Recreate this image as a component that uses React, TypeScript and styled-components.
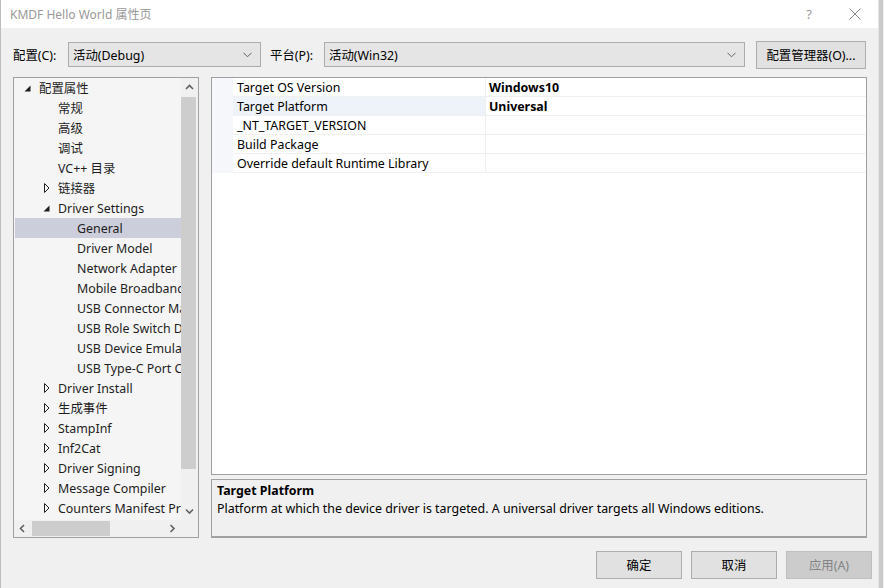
import React from 'react';
import styled, { createGlobalStyle } from 'styled-components';

const GlobalStyle = createGlobalStyle`
  html, body {
    margin: 0;
    padding: 0;
    background: #f0f0f0;
  }
  body {
    font-family: "Noto Sans", "Noto Sans CJK SC", sans-serif;
    font-size: 12.4px;
    color: #000;
  }
  * {
    box-sizing: border-box;
  }
`;

const Screen = styled.div`
  display: flex;
  width: 884px;
  height: 588px;
  overflow: hidden;
`;

const Window = styled.div`
  display: flex;
  flex-direction: column;
  width: 878px;
  height: 100%;
  border-left: 1px solid #bdbdbd;
  background: #f0f0f0;
`;

const Edge = styled.div`
  width: 6px;
  height: 100%;
  background: linear-gradient(to right, #e6e6e6 0 1px, #c9c9c9 1px 5px, #ededed 5px);
`;

const TitleBar = styled.div`
  display: flex;
  align-items: center;
  height: 28px;
  padding-left: 9px;
  background: #fff;
  color: #999;
  font-size: 12px;
`;

const TitleText = styled.span`
  flex: 1;
`;

const TitleButton = styled.div`
  display: flex;
  align-items: center;
  justify-content: center;
  width: 46px;
  height: 28px;
  color: #9a9a9a;
  font-size: 13px;
`;

const Client = styled.div`
  display: flex;
  flex-direction: column;
  flex: 1;
  padding: 0 11px 0 12px;
`;

const ConfigRow = styled.div`
  display: flex;
  align-items: center;
  height: 27px;
  margin-top: 13px;
`;

const FieldLabel = styled.span<{ $width: number }>`
  width: ${(p) => p.$width}px;
  flex: none;
  white-space: nowrap;
`;

const Combo = styled.div<{ $width: number }>`
  display: flex;
  align-items: center;
  justify-content: space-between;
  width: ${(p) => p.$width}px;
  height: 25px;
  padding: 0 8px 0 4px;
  background: #e5e5e5;
  border: 1px solid #acacac;
  flex: none;
`;

const PushButton = styled.div<{ $width: number; $disabled?: boolean }>`
  display: flex;
  align-items: center;
  justify-content: center;
  width: ${(p) => p.$width}px;
  height: 28px;
  flex: none;
  background: ${(p) => (p.$disabled ? '#cccccc' : '#e1e1e1')};
  border: 1px solid ${(p) => (p.$disabled ? '#bfbfbf' : '#adadad')};
  color: ${(p) => (p.$disabled ? '#838383' : '#000')};
`;

const MainArea = styled.div`
  display: flex;
  gap: 12px;
  height: 461px;
  margin-top: 9px;
`;

const TreePanel = styled.div`
  display: flex;
  flex-direction: column;
  width: 186px;
  flex: none;
  border: 1px solid #a0a0a0;
  background: #f5f5f5;
`;

const TreeBody = styled.div`
  display: flex;
  flex: 1;
  min-height: 0;
`;

const TreeList = styled.div`
  flex: 1;
  min-width: 0;
  overflow: hidden;
  padding-left: 1px;
`;

const TreeRow = styled.div<{ $level: number; $selected?: boolean }>`
  display: flex;
  align-items: center;
  height: 20px;
  padding-left: ${(p) => 9 + p.$level * 19}px;
  background: ${(p) => (p.$selected ? '#cccedb' : 'transparent')};
  color: #1e1e1e;
  white-space: nowrap;
`;

const ArrowBox = styled.span`
  display: flex;
  align-items: center;
  width: 15px;
  height: 20px;
  flex: none;
`;

const VScroll = styled.div`
  display: flex;
  flex-direction: column;
  width: 17px;
  flex: none;
  background: #f0f0f0;
`;

const ScrollArrow = styled.div<{ $size: number }>`
  display: flex;
  align-items: center;
  justify-content: center;
  width: 17px;
  height: ${(p) => p.$size}px;
  flex: none;
`;

const VTrack = styled.div`
  flex: 1;
  padding: 1px 1px 0 0;
`;

const VThumb = styled.div`
  width: 15px;
  height: 372px;
  background: #cdcdcd;
`;

const HScrollRow = styled.div`
  display: flex;
  height: 17px;
  flex: none;
  background: #f0f0f0;
`;

const HTrack = styled.div`
  display: flex;
  align-items: center;
  flex: 1;
`;

const HThumb = styled.div`
  width: 78px;
  height: 15px;
  margin-left: 1px;
  background: #cdcdcd;
`;

const RightColumn = styled.div`
  display: flex;
  flex-direction: column;
  gap: 4px;
  flex: 1;
  min-width: 0;
`;

const PropertyGrid = styled.div`
  flex: 1;
  border: 1px solid #a0a0a0;
  background: #fff;
`;

const PropRow = styled.div`
  display: grid;
  grid-template-columns: 21px 252px 1fr;
  height: 19px;
`;

const Gutter = styled.div`
  background: #f5f7fb;
`;

const NameCell = styled.div<{ $selected?: boolean }>`
  display: flex;
  align-items: center;
  padding: 1px 0 0 4px;
  background: ${(p) => (p.$selected ? '#eef2f9' : '#fff')};
  border-bottom: 1px solid #f0f0f0;
  white-space: nowrap;
  overflow: hidden;
`;

const ValueCell = styled.div`
  display: flex;
  align-items: center;
  padding: 1px 0 0 3px;
  border-left: 1px solid #f0f0f0;
  border-bottom: 1px solid #f0f0f0;
  font-weight: 700;
  white-space: nowrap;
  overflow: hidden;
`;

const Description = styled.div`
  height: 59px;
  flex: none;
  padding: 2px 5px;
  border: 1px solid #a0a0a0;
  border-bottom: 2px solid #a0a0a0;
  background: #f0f0f0;
  line-height: 18px;
`;

const DescTitle = styled.div`
  font-weight: 700;
`;

const DescText = styled.div`
  white-space: nowrap;
`;

const ButtonRow = styled.div`
  display: flex;
  justify-content: flex-end;
  gap: 9px;
  margin-top: 13px;
  margin-right: -5px;
`;

const Chevron = ({ dir }: { dir: 'up' | 'down' | 'left' | 'right' }) => {
  const paths = {
    up: 'M1 5 L4.5 1.5 L8 5',
    down: 'M1 1.5 L4.5 5 L8 1.5',
    left: 'M5 1 L1.5 4.5 L5 8',
    right: 'M1.5 1 L5 4.5 L1.5 8',
  };
  const horizontal = dir === 'left' || dir === 'right';
  return (
    <svg width={horizontal ? 7 : 9} height={horizontal ? 9 : 7} viewBox={horizontal ? '0 0 7 9' : '0 0 9 7'}>
      <path d={paths[dir]} fill="none" stroke="#606060" strokeWidth="1.6" />
    </svg>
  );
};

const ComboChevron = () => (
  <svg width="9" height="6" viewBox="0 0 9 6">
    <path d="M0.5 0.8 L4.5 4.8 L8.5 0.8" fill="none" stroke="#606060" strokeWidth="1" />
  </svg>
);

const TreeArrow = ({ open }: { open: boolean }) =>
  open ? (
    <svg width="7" height="7" viewBox="0 0 7 7" style={{ marginTop: 1 }}>
      <polygon points="6.5,0.5 6.5,6.5 0.5,6.5" fill="#1e1e1e" />
    </svg>
  ) : (
    <svg width="6" height="10" viewBox="0 0 6 10" style={{ marginLeft: 1 }}>
      <polygon points="0.5,0.5 5,5 0.5,9.5" fill="none" stroke="#1e1e1e" strokeWidth="1" />
    </svg>
  );

type TreeItem = { label: string; level: number; arrow?: 'open' | 'closed'; selected?: boolean };

const treeItems: TreeItem[] = [
  { label: '配置属性', level: 0, arrow: 'open' },
  { label: '常规', level: 1 },
  { label: '高级', level: 1 },
  { label: '调试', level: 1 },
  { label: 'VC++ 目录', level: 1 },
  { label: '链接器', level: 1, arrow: 'closed' },
  { label: 'Driver Settings', level: 1, arrow: 'open' },
  { label: 'General', level: 2, selected: true },
  { label: 'Driver Model', level: 2 },
  { label: 'Network Adapter', level: 2 },
  { label: 'Mobile Broadband', level: 2 },
  { label: 'USB Connector Manager', level: 2 },
  { label: 'USB Role Switch Driver', level: 2 },
  { label: 'USB Device Emulation', level: 2 },
  { label: 'USB Type-C Port Controller', level: 2 },
  { label: 'Driver Install', level: 1, arrow: 'closed' },
  { label: '生成事件', level: 1, arrow: 'closed' },
  { label: 'StampInf', level: 1, arrow: 'closed' },
  { label: 'Inf2Cat', level: 1, arrow: 'closed' },
  { label: 'Driver Signing', level: 1, arrow: 'closed' },
  { label: 'Message Compiler', level: 1, arrow: 'closed' },
  { label: 'Counters Manifest Preprocessor', level: 1, arrow: 'closed' },
];

const properties = [
  { name: 'Target OS Version', value: 'Windows10' },
  { name: 'Target Platform', value: 'Universal', selected: true },
  { name: '_NT_TARGET_VERSION', value: '' },
  { name: 'Build Package', value: '' },
  { name: 'Override default Runtime Library', value: '' },
];

export default function App() {
  return (
    <Screen>
      <GlobalStyle />
      <Window>
        <TitleBar>
          <TitleText>KMDF Hello World 属性页</TitleText>
          <TitleButton>?</TitleButton>
          <TitleButton>
            <svg width="12" height="12" viewBox="0 0 12 12">
              <path d="M0.5 0.5 L11.5 11.5 M11.5 0.5 L0.5 11.5" stroke="#8a8a8a" strokeWidth="1" />
            </svg>
          </TitleButton>
        </TitleBar>
        <Client>
          <ConfigRow>
            <FieldLabel $width={55}>配置(C):</FieldLabel>
            <Combo $width={193}>
              <span>活动(Debug)</span>
              <ComboChevron />
            </Combo>
            <FieldLabel $width={54} style={{ marginLeft: 9 }}>平台(P):</FieldLabel>
            <Combo $width={421}>
              <span>活动(Win32)</span>
              <ComboChevron />
            </Combo>
            <PushButton $width={110} style={{ marginLeft: 11 }}>配置管理器(O)...</PushButton>
          </ConfigRow>
          <MainArea>
            <TreePanel>
              <TreeBody>
                <TreeList>
                  {treeItems.map((item) => (
                    <TreeRow key={item.label} $level={item.level} $selected={item.selected}>
                      <ArrowBox>{item.arrow && <TreeArrow open={item.arrow === 'open'} />}</ArrowBox>
                      <span>{item.label}</span>
                    </TreeRow>
                  ))}
                </TreeList>
                <VScroll>
                  <ScrollArrow $size={18}>
                    <Chevron dir="up" />
                  </ScrollArrow>
                  <VTrack>
                    <VThumb />
                  </VTrack>
                  <ScrollArrow $size={17}>
                    <Chevron dir="down" />
                  </ScrollArrow>
                </VScroll>
              </TreeBody>
              <HScrollRow>
                <ScrollArrow $size={17}>
                  <Chevron dir="left" />
                </ScrollArrow>
                <HTrack>
                  <HThumb />
                </HTrack>
                <ScrollArrow $size={17}>
                  <Chevron dir="right" />
                </ScrollArrow>
                <ScrollArrow $size={17} />
              </HScrollRow>
            </TreePanel>
            <RightColumn>
              <PropertyGrid>
                {properties.map((p) => (
                  <PropRow key={p.name}>
                    <Gutter />
                    <NameCell $selected={p.selected}>{p.name}</NameCell>
                    <ValueCell>{p.value}</ValueCell>
                  </PropRow>
                ))}
              </PropertyGrid>
              <Description>
                <DescTitle>Target Platform</DescTitle>
                <DescText>Platform at which the device driver is targeted. A universal driver targets all Windows editions.</DescText>
              </Description>
            </RightColumn>
          </MainArea>
          <ButtonRow>
            <PushButton $width={86}>确定</PushButton>
            <PushButton $width={86}>取消</PushButton>
            <PushButton $width={86} $disabled>
              应用(A)
            </PushButton>
          </ButtonRow>
        </Client>
      </Window>
      <Edge />
    </Screen>
  );
}
